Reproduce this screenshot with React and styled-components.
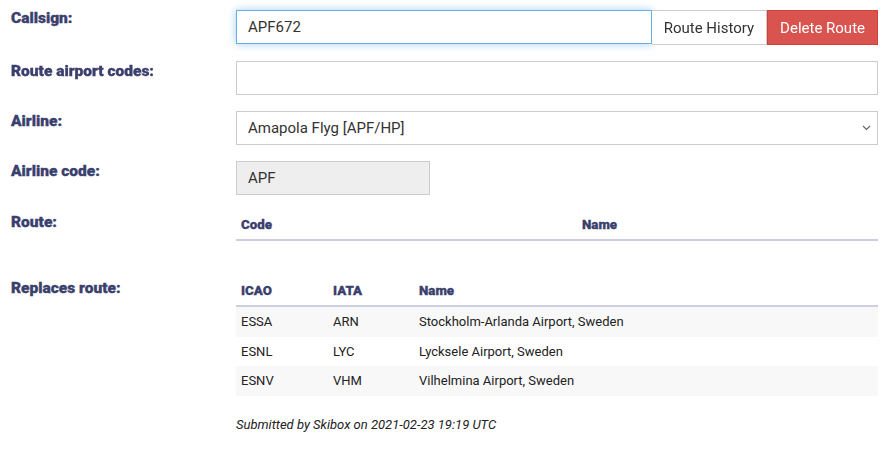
import React from "react";
import styled, { createGlobalStyle } from "styled-components";

const Global = createGlobalStyle`
  html, body { margin: 0; padding: 0; background: #fff; }
  body { font-family: Roboto, "Liberation Sans", sans-serif; color: #222; }
  * { box-sizing: border-box; }
`;

const Page = styled.div`
  padding: 8px 15px 0 11px;
`;

const FormRow = styled.div`
  display: grid;
  grid-template-columns: 225px 1fr;
  align-items: start;
  margin-bottom: ${(p) => p.$gap ?? 14}px;
`;

const Label = styled.div`
  padding-top: ${(p) => (p.$first ? 0 : 2)}px;
  font-family: Roboto, "Liberation Sans", sans-serif;
  font-weight: 900;
  font-size: 15.5px;
  line-height: 20px;
  color: #3b3f6d;
  -webkit-text-stroke: 0.35px #3b3f6d;
`;

const Field = styled.div`
  margin-top: 2px;
  display: flex;
  width: ${(p) => p.$width || "100%"};
`;

const TextInput = styled.input`
  flex: 1;
  min-width: 0;
  height: 34px;
  padding: 0 11px;
  font-family: Roboto, "Liberation Sans", sans-serif;
  font-size: 15px;
  color: #333;
  background: ${(p) => (p.readOnly ? "#eeeeee" : "#fff")};
  border: 1px solid ${(p) => (p.$focus ? "#66afe9" : "#cccccc")};
  box-shadow: ${(p) =>
    p.$focus ? "0 0 8px rgba(102,175,233,0.6)" : "none"};
  outline: none;
  border-radius: 0;
  caret-color: #333;
`;

const Button = styled.button`
  height: 35px;
  padding: 0 12px;
  font-family: Roboto, "Liberation Sans", sans-serif;
  font-size: 15px;
  border-radius: 0;
  cursor: pointer;
  color: ${(p) => (p.$danger ? "#fff" : "#333")};
  background: ${(p) => (p.$danger ? "#d9534f" : "#fff")};
  border: 1px solid ${(p) => (p.$danger ? "#d43f3a" : "#cccccc")};
  border-left-width: ${(p) => (p.$danger ? 1 : 0)}px;
`;

const SelectWrap = styled.div`
  position: relative;
  flex: 1;
`;

const Select = styled.select`
  width: 100%;
  height: 34px;
  padding: 0 11px;
  font-family: Roboto, "Liberation Sans", sans-serif;
  font-size: 15px;
  color: #333;
  background: #fff;
  border: 1px solid #cccccc;
  border-radius: 0;
  appearance: none;
  -webkit-appearance: none;
  outline: none;
`;

const Chevron = styled.svg`
  position: absolute;
  right: 7px;
  top: 14px;
  pointer-events: none;
`;

const Table = styled.table`
  width: 100%;
  border-collapse: collapse;
  font-family: Roboto, "Liberation Sans", sans-serif;
`;

const Th = styled.th`
  text-align: left;
  font-weight: 900;
  font-size: 13.3px;
  line-height: 15px;
  color: #3b3f6d;
  -webkit-text-stroke: 0.3px #3b3f6d;
  padding: 7px 5px 7px;
  border-bottom: 2px solid #cdcfe0;
  width: ${(p) => p.$w || "auto"};
`;

const Tr = styled.tr`
  background: ${(p) => (p.$odd ? "#f8f8f8" : "#fff")};
  & + & td { border-top: 1px solid #dddddd; }
`;

const Td = styled.td`
  font-size: 13px;
  line-height: 15px;
  color: #222;
  padding: 7px 5px 7.5px;
`;

const Submitted = styled.p`
  margin: 21px 0 0;
  font-family: Roboto, "Liberation Sans", sans-serif;
  font-style: italic;
  font-size: 13px;
  color: #222;
`;

const airports = [
  ["ESSA", "ARN", "Stockholm-Arlanda Airport, Sweden"],
  ["ESNL", "LYC", "Lycksele Airport, Sweden"],
  ["ESNV", "VHM", "Vilhelmina Airport, Sweden"],
];

export default function App() {
  return (
    <Page>
      <Global />
      <FormRow>
        <Label $first>Callsign:</Label>
        <Field>
          <TextInput $focus autoFocus defaultValue="APF672" />
          <Button>Route History</Button>
          <Button $danger>Delete Route</Button>
        </Field>
      </FormRow>
      <FormRow>
        <Label>Route airport codes:</Label>
        <Field>
          <TextInput defaultValue="" />
        </Field>
      </FormRow>
      <FormRow>
        <Label>Airline:</Label>
        <Field>
          <SelectWrap>
            <Select defaultValue="apf">
              <option value="apf">Amapola Flyg [APF/HP]</option>
            </Select>
            <Chevron width="9" height="6" viewBox="0 0 9 6">
              <path d="M1 1l3.5 3.5L8 1" fill="none" stroke="#666" strokeWidth="1.2" />
            </Chevron>
          </SelectWrap>
        </Field>
      </FormRow>
      <FormRow $gap={15}>
        <Label>Airline code:</Label>
        <Field $width="194px">
          <TextInput readOnly defaultValue="APF" />
        </Field>
      </FormRow>
      <FormRow $gap={35}>
        <Label>Route:</Label>
        <Table>
          <thead>
            <tr>
              <Th $w="341px">Code</Th>
              <Th>Name</Th>
            </tr>
          </thead>
          <tbody />
        </Table>
      </FormRow>
      <FormRow $gap={0}>
        <Label>Replaces route:</Label>
        <div>
          <Table>
            <thead>
              <tr>
                <Th $w="92px">ICAO</Th>
                <Th $w="86px">IATA</Th>
                <Th>Name</Th>
              </tr>
            </thead>
            <tbody>
              {airports.map((a, i) => (
                <Tr key={a[0]} $odd={i % 2 === 0}>
                  <Td>{a[0]}</Td>
                  <Td>{a[1]}</Td>
                  <Td>{a[2]}</Td>
                </Tr>
              ))}
            </tbody>
          </Table>
          <Submitted>Submitted by Skibox on 2021-02-23 19:19 UTC</Submitted>
        </div>
      </FormRow>
    </Page>
  );
}
